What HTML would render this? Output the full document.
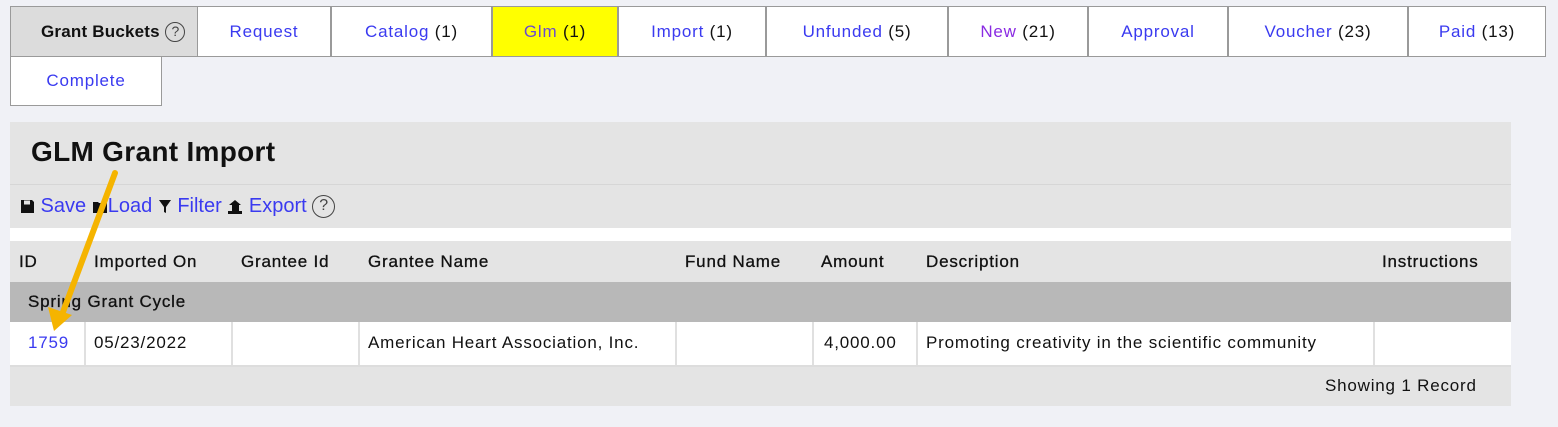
<!DOCTYPE html>
<html><head><meta charset="utf-8"><style>
*{margin:0;padding:0;box-sizing:border-box}
body{width:1558px;height:427px;background:#f0f1f6;font-family:"Liberation Sans",sans-serif;font-size:17px;letter-spacing:0.8px;color:#111;position:relative;overflow:hidden}
.a{position:absolute;white-space:nowrap}
.tab{position:absolute;top:6px;height:51px;border:1px solid #9a9a9a;background:#fff;display:flex;align-items:center;justify-content:center;color:#3a3af0;margin-left:-1px;white-space:nowrap}
.tab b{font-weight:normal;color:#111}
.c{position:absolute;display:flex;align-items:center;white-space:nowrap}
.l{color:#3a3af0}
.q{display:inline-block;width:20px;height:20px;border:1.5px solid #444;border-radius:50%;font-size:14px;text-align:center;line-height:17px;color:#444;letter-spacing:0}
.vl{position:absolute;top:322px;height:43px;width:2px;background:#e0e0e0}
.h{top:252px;-webkit-text-stroke:0.3px #111}
</style></head><body>
<div class="tab" style="left:10px;width:188px;background:#dcdcdc;color:#111;margin-left:0;justify-content:flex-start"><span style="margin-left:30px;font-weight:bold;letter-spacing:0.2px">Grant Buckets</span>&nbsp;<span class="q">?</span></div>
<div class="tab" style="left:198px;width:134px">Request</div>
<div class="tab" style="left:332px;width:161px">Catalog&nbsp;<b>(1)</b></div>
<div class="tab" style="left:493px;width:126px;background:#ffff00;color:#6a4bd0">Glm&nbsp;<b>(1)</b></div>
<div class="tab" style="left:619px;width:148px">Import&nbsp;<b>(1)</b></div>
<div class="tab" style="left:767px;width:182px">Unfunded&nbsp;<b>(5)</b></div>
<div class="tab" style="left:949px;width:140px;color:#8a2be2">New&nbsp;<b>(21)</b></div>
<div class="tab" style="left:1089px;width:140px">Approval</div>
<div class="tab" style="left:1229px;width:180px">Voucher&nbsp;<b>(23)</b></div>
<div class="tab" style="left:1409px;width:138px">Paid&nbsp;<b>(13)</b></div>
<div class="tab" style="left:10px;top:56px;height:50px;width:152px;margin-left:0">Complete</div>

<div class="a" style="left:10px;top:122px;width:1501px;height:63px;background:#e4e4e4;border-bottom:1px solid #d6d6d6"></div>
<div class="a" style="left:31px;top:136px;font-size:28px;font-weight:bold;letter-spacing:0.3px">GLM Grant Import</div>
<div class="a" style="left:10px;top:185px;width:1501px;height:43px;background:#e4e4e4"></div>
<div class="c" style="left:20px;top:194px;height:24px;font-size:20px;letter-spacing:0">
<svg width="15" height="15" viewBox="0 0 15 15"><path d="M1 1h11l2 2v11H1z" fill="#111"/><rect x="4" y="1.5" width="6" height="4" fill="#e4e4e4"/></svg><span class="l">&nbsp;Save&nbsp;</span><svg width="16" height="15" viewBox="0 0 16 15"><path d="M1 3h5l1 1h8v10H1z" fill="#111"/></svg><span class="l">Load&nbsp;</span><svg width="14" height="15" viewBox="0 0 14 15"><path d="M1 1h12L8 8v6l-2-1V8z" fill="#111"/></svg><span class="l">&nbsp;Filter&nbsp;</span><svg width="16" height="16" viewBox="0 0 16 16"><path d="M4 2h7v6h3L8 13 2 8h2z" fill="#111" transform="rotate(180 8 7.5)"/><rect x="1" y="13" width="14" height="3" fill="#111"/></svg><span class="l">&nbsp;Export&nbsp;</span><span class="q" style="width:23px;height:23px;line-height:20px;font-size:16px">?</span></div>
<div class="a" style="left:10px;top:228px;width:1501px;height:13px;background:#fff"></div>
<div class="a" style="left:10px;top:241px;width:1501px;height:41px;background:#e4e4e4"></div>
<div class="a" style="left:10px;top:282px;width:1501px;height:40px;background:#b8b8b8"></div>
<div class="a" style="left:10px;top:322px;width:1501px;height:43px;background:#fff"></div>
<div class="a" style="left:10px;top:365px;width:1501px;height:41px;background:#e4e4e4;border-top:2px solid #ddd"></div>
<div class="vl" style="left:84px"></div><div class="vl" style="left:231px"></div><div class="vl" style="left:358px"></div><div class="vl" style="left:675px"></div><div class="vl" style="left:812px"></div><div class="vl" style="left:916px"></div><div class="vl" style="left:1373px"></div>
<div class="a h" style="left:19px">ID</div>
<div class="a h" style="left:94px">Imported On</div>
<div class="a h" style="left:241px">Grantee Id</div>
<div class="a h" style="left:368px">Grantee Name</div>
<div class="a h" style="left:685px">Fund Name</div>
<div class="a h" style="left:821px">Amount</div>
<div class="a h" style="left:926px">Description</div>
<div class="a h" style="left:1382px">Instructions</div>
<div class="a" style="top:292px;left:28px;-webkit-text-stroke:0.3px #111">Spring Grant Cycle</div>
<div class="a l" style="top:333px;left:28px">1759</div>
<div class="a" style="top:333px;left:94px">05/23/2022</div>
<div class="a" style="top:333px;left:368px">American Heart Association, Inc.</div>
<div class="a" style="top:333px;left:824px">4,000.00</div>
<div class="a" style="top:333px;left:926px">Promoting creativity in the scientific community</div>
<div class="a" style="top:376px;left:1325px">Showing 1 Record</div>
<svg class="a" style="left:0;top:0" width="1558" height="427"><line x1="115" y1="173" x2="63" y2="312" stroke="#f5b400" stroke-width="6" stroke-linecap="round"/><polygon points="54,331 48,307 72,315" fill="#f5b400"/></svg>
</body></html>
